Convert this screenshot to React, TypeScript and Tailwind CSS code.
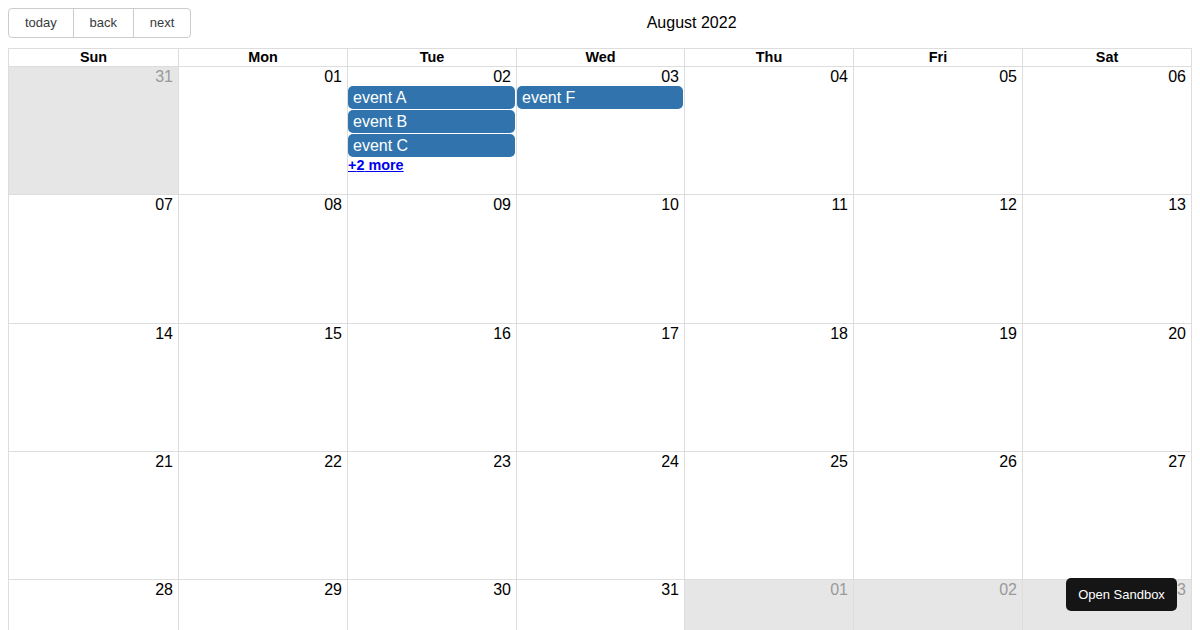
import React from 'react';

type Day = { label: string; offRange?: boolean };

const weekdays = ['Sun', 'Mon', 'Tue', 'Wed', 'Thu', 'Fri', 'Sat'];

const events: Record<string, string[]> = {
  '02': ['event A', 'event B', 'event C'],
  '03': ['event F'],
};

const hiddenCount: Record<string, number> = { '02': 2 };

// column widths of the month grid, left border included
const cols = 'grid grid-cols-[170px_169px_169px_168px_169px_169px_1fr]';

function buildWeeks(): Day[][] {
  const days: Day[] = [{ label: '31', offRange: true }];
  for (let d = 1; d <= 31; d++) days.push({ label: String(d).padStart(2, '0') });
  for (let d = 1; d <= 3; d++) days.push({ label: String(d).padStart(2, '0'), offRange: true });
  const weeks: Day[][] = [];
  for (let i = 0; i < days.length; i += 7) weeks.push(days.slice(i, i + 7));
  return weeks;
}

function Toolbar() {
  return (
    <div className="flex items-center mb-[10px] h-[30px]">
      <div className="flex text-[13px] text-[#373a3c]">
        <button className="h-[30px] px-[15.9px] border border-[#ccc] rounded-l-[4px]">today</button>
        <button className="h-[30px] px-[15.9px] border border-[#ccc] -ml-px">back</button>
        <button className="h-[30px] px-[15.9px] border border-[#ccc] rounded-r-[4px] -ml-px">next</button>
      </div>
      <div className="flex-1 text-center text-base px-[10px]">August 2022</div>
    </div>
  );
}

function DayCell({ day }: { day: Day }) {
  const list = day.offRange ? [] : events[day.label] ?? [];
  const more = day.offRange ? 0 : hiddenCount[day.label] ?? 0;
  return (
    <div className={`min-w-0 flex flex-col border-l border-[#ddd] ${day.offRange ? 'bg-[#e6e6e6]' : ''}`}>
      <div
        className={`h-[19px] leading-[20px] text-right pr-[5px] text-base ${
          day.offRange ? 'text-[#999]' : 'text-black'
        }`}
      >
        {day.label}
      </div>
      {list.map((e) => (
        <div
          key={e}
          className="mr-px mb-px h-[23px] px-[5px] py-[2px] leading-[19px] rounded-[5px] bg-[#3174ad] text-white text-base"
        >
          {e}
        </div>
      ))}
      {more > 0 && (
        <a href="#" className="text-[14.4px] font-bold text-[#0000ee] underline leading-[15px] self-start">
          +{more} more
        </a>
      )}
    </div>
  );
}

export default function App() {
  const weeks = buildWeeks();
  return (
    <div className="font-['Liberation_Sans',Arial,sans-serif] text-black p-2">
      <Toolbar />
      <div className="border-y border-r border-[#ddd] flex flex-col">
        <div className={`${cols} border-b border-[#ddd]`}>
          {weekdays.map((w) => (
            <div key={w} className="h-[17px] leading-[17px] text-center font-bold text-[14.4px] border-l border-[#ddd]">
              {w}
            </div>
          ))}
        </div>
        {weeks.map((week, wi) => (
          <div key={wi} className={`${cols} h-[128.25px] border-b border-[#ddd] last:border-b-0`}>
            {week.map((day, di) => (
              <DayCell key={di} day={day} />
            ))}
          </div>
        ))}
      </div>
      <button className="fixed right-[23px] bottom-[19px] w-[111px] h-[33px] rounded-[5px] bg-[#151515] text-white text-[13px]">
        Open Sandbox
      </button>
    </div>
  );
}
